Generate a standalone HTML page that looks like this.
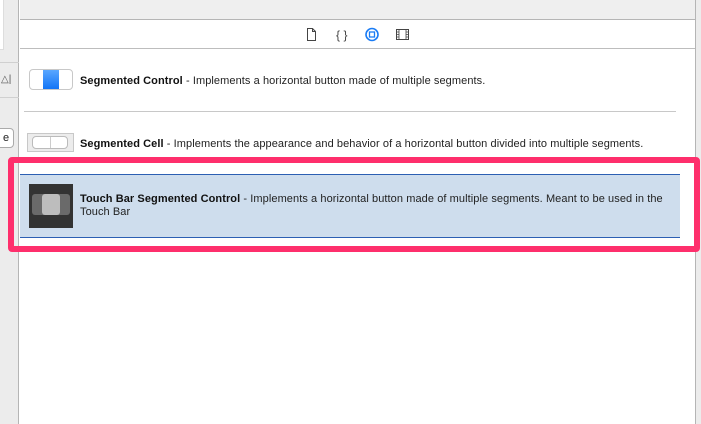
<!DOCTYPE html>
<html><head><style>
*{margin:0;padding:0;box-sizing:border-box}
body{width:701px;height:424px;position:relative;overflow:hidden;background:#fff;font-family:"Liberation Sans",Helvetica,Arial,sans-serif;font-size:11px;color:#222;letter-spacing:0.08px}
.a{position:absolute}
b{font-weight:bold;color:#111}
</style></head><body>
<div class="a" style="left:0;top:0;width:19px;height:424px;background:#ececec;border-right:1px solid #b5b5b5"></div>
<div class="a" style="left:0;top:0;width:4px;height:50px;background:#fff;border-right:1px solid #ddd;border-bottom:1px solid #ddd"></div>
<div class="a" style="left:0;top:62px;width:19px;height:1px;background:#d0d0d0"></div>
<div class="a" style="left:0;top:97px;width:19px;height:1px;background:#d0d0d0"></div>
<div class="a" style="left:1px;top:74px;font-size:10px;color:#555">△|</div>
<div class="a" style="left:-6px;top:128px;width:20px;height:20px;border:1px solid #aaa;border-radius:4px;background:#fff;font-size:11px;padding:3px 0 0 8px">e</div>
<div class="a" style="left:20px;top:0;width:676px;height:20px;background:#efefef;border-bottom:1px solid #b5b5b5"></div>
<div class="a" style="left:695px;top:0;width:6px;height:424px;background:#ececec;border-left:1px solid #b5b5b5"></div>
<div class="a" style="left:20px;top:48px;width:675px;height:1px;background:#bdbdbd"></div>
<svg class="a" style="left:305px;top:27px" width="110" height="16" viewBox="0 0 110 16">
<path d="M2.5 1.5h5l3 3v9h-8z M7.5 1.5v3h3" fill="none" stroke="#444"/>
<text x="31" y="12" font-size="12" fill="#444" font-family="Liberation Sans">{ }</text>
<circle cx="67" cy="7.5" r="6" fill="none" stroke="#1a7cf5" stroke-width="1.6"/><rect x="64.5" y="5" width="5" height="5" fill="none" stroke="#1a7cf5" stroke-width="1.3"/>
<rect x="91.5" y="2.5" width="12" height="10" fill="none" stroke="#444"/><path d="M94 3v9M101 3v9M92 5h2M92 7.5h2M92 10h2M101 5h2M101 7.5h2M101 10h2" stroke="#444" stroke-width=".8"/>
</svg>
<div class="a" style="left:29px;top:69px;width:44px;height:21px;border:1px solid #c8c8c8;border-radius:4px;background:#fff;overflow:hidden"><div style="position:absolute;left:13px;top:0;width:16px;height:21px;background:linear-gradient(#5aa7ff,#0a6ff5)"></div></div>
<div class="a" style="left:80px;top:75px"><b>Segmented Control</b> - Implements a horizontal button made of multiple segments.</div>
<div class="a" style="left:24px;top:111px;width:652px;height:1px;background:#c8c8c8"></div>
<div class="a" style="left:27px;top:133px;width:47px;height:19px;background:#ececec;border:1px solid #c8c8c8"><div style="position:absolute;left:4px;top:2px;width:36px;height:13px;border:1px solid #bbb;border-radius:4px;background:#fff"><div style="position:absolute;left:17px;top:0;width:1px;height:11px;background:#ccc"></div></div></div>
<div class="a" style="left:80px;top:138px"><b>Segmented Cell</b> - Implements the appearance and behavior of a horizontal button divided into multiple segments.</div>
<div class="a" style="left:20px;top:174px;width:660px;height:64px;background:#cedded;border-top:1px solid #2c5fb3;border-bottom:1px solid #2c5fb3"></div>
<div class="a" style="left:29px;top:184px;width:44px;height:44px;background:#333"><div style="position:absolute;left:3px;top:10px;width:38px;height:21px;background:#6a6a6a;border-radius:3px"></div><div style="position:absolute;left:13px;top:10px;width:18px;height:21px;background:#bdbdbd;border-radius:3px"></div></div>
<div class="a" style="left:80px;top:193px;line-height:13px;width:600px"><b>Touch Bar Segmented Control</b> - Implements a horizontal button made of multiple segments. Meant to be used in the<br>Touch Bar</div>
<div class="a" style="left:8px;top:157px;width:692px;height:95px;border:6px solid #fe2f6c;border-radius:4px"></div>
</body></html>
